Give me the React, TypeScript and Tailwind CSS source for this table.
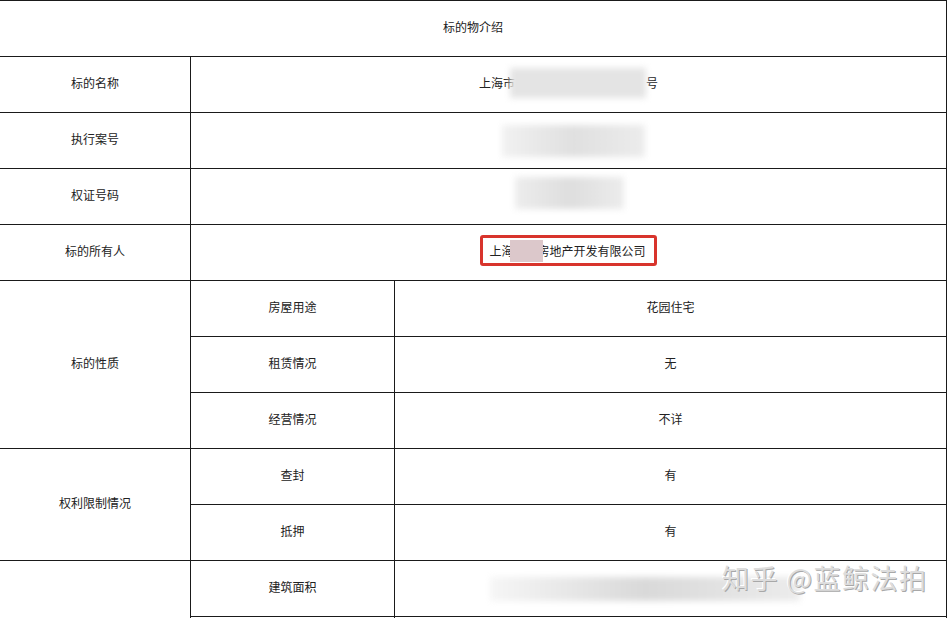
import React from 'react';

const cell = 'flex items-center justify-center pb-[3px] border-r border-b border-[#1a1a1a] text-[12px] text-[#222]';

const Blur: React.FC<{ className: string }> = ({ className }) => (
  <span className={`inline-block blur-[3px] ${className}`}></span>
);

const App: React.FC = () => {
  return (
    <div className="relative w-[949px] h-[618px] overflow-hidden bg-white font-['Microsoft_YaHei','Noto_Sans_CJK_SC',sans-serif]">
      <div className="grid w-[947px] grid-cols-[191px_204px_1fr] auto-rows-[56px] border-t border-[#1a1a1a]">
        {/* header */}
        <div className={`${cell} col-span-3`}>标的物介绍</div>

        {/* basic info */}
        <div className={cell}>标的名称</div>
        <div className={`${cell} col-span-2`}>
          <div className="flex items-center">
            <span>上海市</span>
            <Blur className="w-[136px] h-[30px] -ml-[5px] bg-[#e4e4e4]" />
            <span>号</span>
          </div>
        </div>

        <div className={cell}>执行案号</div>
        <div className={`${cell} col-span-2`}>
          <Blur className="w-[143px] h-[32px] ml-[9px] mt-[4px] bg-gradient-to-r from-[#f1f1f1] via-[#e0e0e0] to-[#ececec]" />
        </div>

        <div className={cell}>权证号码</div>
        <div className={`${cell} col-span-2`}>
          <Blur className="w-[109px] h-[32px] ml-[2px] -mt-[4px] bg-gradient-to-r from-[#ededed] via-[#dedede] to-[#ececec]" />
        </div>

        <div className={cell}>标的所有人</div>
        <div className={`${cell} col-span-2`}>
          <div className="relative flex items-center h-[31px] pl-[6px] pr-[8px] border-[3px] border-[#d8342c] rounded-[3px] -mt-[1px]">
            <span>上海某某房地产开发有限公司</span>
            <span className="absolute left-[27px] top-[2px] w-[33px] h-[22px] bg-[#dcc8cb]"></span>
          </div>
        </div>

        {/* 标的性质 */}
        <div className={`${cell} row-span-3`}>标的性质</div>
        <div className={cell}>房屋用途</div>
        <div className={cell}>花园住宅</div>
        <div className={cell}>租赁情况</div>
        <div className={cell}>无</div>
        <div className={cell}>经营情况</div>
        <div className={cell}>不详</div>

        {/* 权利限制情况 */}
        <div className={`${cell} row-span-2`}>权利限制情况</div>
        <div className={cell}>查封</div>
        <div className={cell}>有</div>
        <div className={cell}>抵押</div>
        <div className={cell}>有</div>

        {/* 面积 */}
        <div className={`${cell} row-span-2`}></div>
        <div className={cell}>建筑面积</div>
        <div className={`${cell} justify-start`}>
          <Blur className="w-[310px] h-[24px] ml-[95px] mt-[4px] bg-gradient-to-r from-[#f6f6f6] via-[#d9d9d9] to-[#ececec]" />
        </div>
        <div className={cell}></div>
        <div className={cell}></div>
      </div>

      {/* watermark */}
      <div className="absolute left-[722px] top-[561px] text-[27px] leading-[34px] tracking-[1.5px] text-[#dddddd] [text-shadow:1px_1px_0_#a8a8a8,-1px_-1px_0_#ffffff]">
        知乎 @蓝鲸法拍
      </div>
    </div>
  );
};

export default App;
